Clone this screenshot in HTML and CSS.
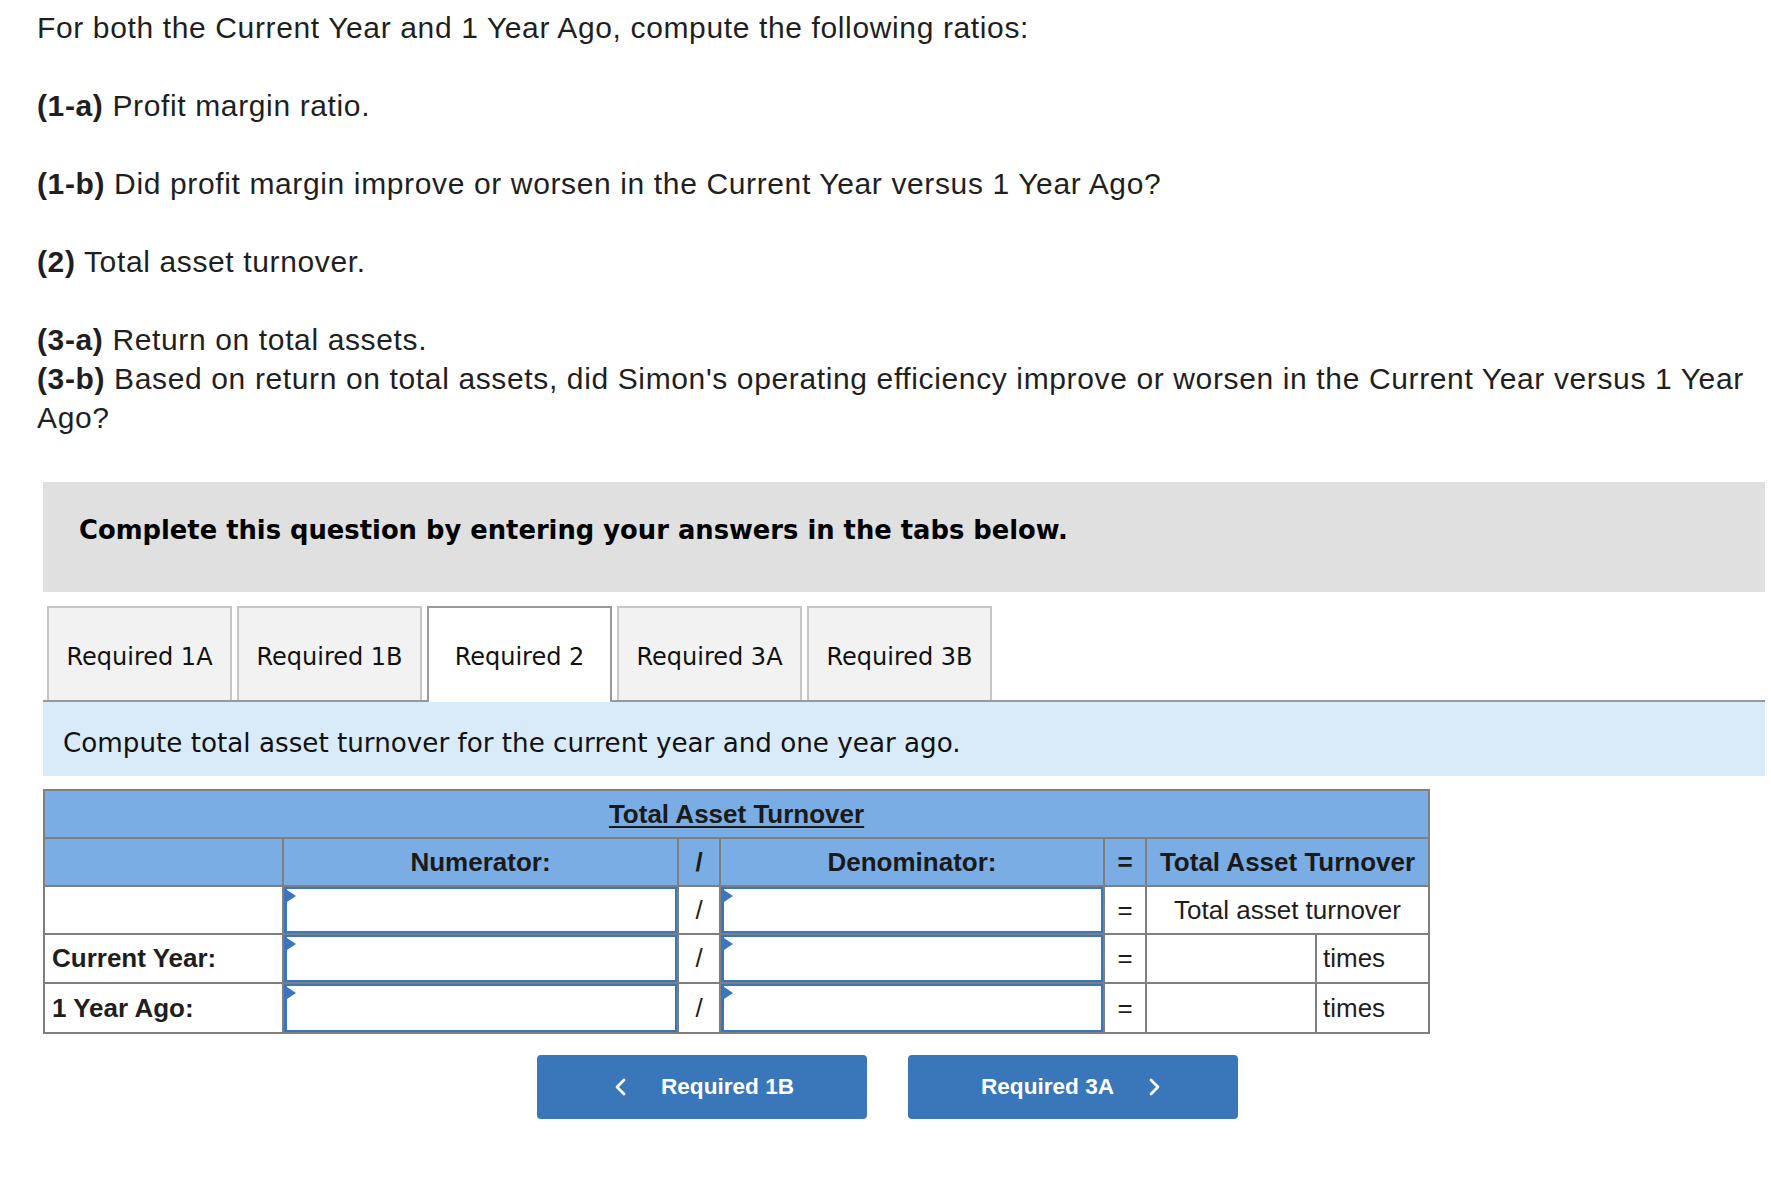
FILE: index.html
```html
<!DOCTYPE html>
<html lang="en">
<head>
<meta charset="utf-8">
<title>Total Asset Turnover</title>
<link rel="stylesheet" href="styles.css">
</head>
<body>
<div class="question">
  <p class="para">For both the Current Year and 1 Year Ago, compute the following ratios:</p>
  <p class="para"><b>(1-a)</b> Profit margin ratio.</p>
  <p class="para"><b>(1-b)</b> Did profit margin improve or worsen in the Current Year versus 1 Year Ago?</p>
  <p class="para"><b>(2)</b> Total asset turnover.</p>
  <p class="para tight"><b>(3-a)</b> Return on total assets.</p>
  <p class="para last"><b>(3-b)</b> Based on return on total assets, did Simon's operating efficiency improve or worsen in the Current Year versus 1 Year Ago?</p>
</div>

<div class="instructions">Complete this question by entering your answers in the tabs below.</div>

<div class="tabs">
  <div class="tab">Required 1A</div>
  <div class="tab">Required 1B</div>
  <div class="tab active">Required 2</div>
  <div class="tab">Required 3A</div>
  <div class="tab">Required 3B</div>
</div>

<div class="prompt">Compute total asset turnover for the current year and one year ago.</div>

<table class="grid">
  <colgroup>
    <col class="c-label">
    <col class="c-num">
    <col class="c-op">
    <col class="c-den">
    <col class="c-op">
    <col class="c-val">
    <col class="c-unit">
  </colgroup>
  <tr class="head">
    <td colspan="7" class="title"><span>Total Asset Turnover</span></td>
  </tr>
  <tr class="head">
    <td></td>
    <td class="center">Numerator:</td>
    <td class="center">/</td>
    <td class="center">Denominator:</td>
    <td class="center">=</td>
    <td colspan="2" class="center">Total Asset Turnover</td>
  </tr>
  <tr>
    <td></td>
    <td class="in"><div class="field"></div></td>
    <td class="center">/</td>
    <td class="in"><div class="field"></div></td>
    <td class="center">=</td>
    <td colspan="2" class="center">Total asset turnover</td>
  </tr>
  <tr class="row-b">
    <td class="label">Current Year:</td>
    <td class="in"><div class="field"></div></td>
    <td class="center">/</td>
    <td class="in"><div class="field"></div></td>
    <td class="center">=</td>
    <td></td>
    <td class="unit">times</td>
  </tr>
  <tr class="row-c">
    <td class="label">1 Year Ago:</td>
    <td class="in"><div class="field"></div></td>
    <td class="center">/</td>
    <td class="in"><div class="field"></div></td>
    <td class="center">=</td>
    <td></td>
    <td class="unit">times</td>
  </tr>
</table>

<div class="nav">
  <div class="btn prev">
    <svg class="chev" width="14" height="18" viewBox="0 0 14 18"><polyline points="11,2 4,9 11,16" fill="none" stroke="#fff" stroke-width="2.8" stroke-linecap="round" stroke-linejoin="round"/></svg>
    <span>Required 1B</span>
  </div>
  <div class="btn next">
    <span>Required 3A</span>
    <svg class="chev" width="14" height="18" viewBox="0 0 14 18"><polyline points="3,2 10,9 3,16" fill="none" stroke="#fff" stroke-width="2.8" stroke-linecap="round" stroke-linejoin="round"/></svg>
  </div>
</div>
</body>
</html>
```

FILE: styles.css
```css
html, body {
  margin: 0;
  padding: 0;
  background: #fff;
}

body {
  font-family: "Liberation Sans", Arial, sans-serif;
  color: #1f1f1f;
}

.question {
  padding: 8px 6px 0 37px;
  font-size: 30px;
  line-height: 39px;
  letter-spacing: 0.021em;
}

.para {
  margin: 0 0 39px 0;
}

.para.tight,
.para.last {
  margin-bottom: 0;
}

.question b {
  font-weight: bold;
}

.instructions {
  margin: 45px 6px 0 43px;
  height: 110px;
  box-sizing: border-box;
  padding: 33px 0 0 36px;
  background: #e0e0e0;
  font-family: "DejaVu Sans", Verdana, sans-serif;
  font-weight: bold;
  font-size: 25.8px;
  line-height: 30px;
  color: #000;
}

.tabs {
  display: flex;
  gap: 5px;
  margin: 14px 6px 0 43px;
  padding-left: 4px;
  border-bottom: 2px solid #999;
  height: 94px;
}

.tab {
  width: 185px;
  height: 94px;
  box-sizing: border-box;
  border: 2px solid #c6c6c6;
  border-bottom: none;
  background: #f2f2f2;
  display: flex;
  align-items: center;
  justify-content: center;
  padding-top: 6px;
  font-family: "DejaVu Sans", Verdana, sans-serif;
  font-size: 24px;
  color: #111;
}

.tab.active {
  background: #fff;
  border-color: #999;
  height: 96px;
  margin-bottom: -2px;
  padding-bottom: 2px;
}

.prompt {
  margin: 0 6px 0 43px;
  height: 74px;
  box-sizing: border-box;
  padding: 26px 0 0 20px;
  background: #d9ebf9;
  font-family: "DejaVu Sans", Verdana, sans-serif;
  font-size: 26.2px;
  line-height: 30px;
  color: #111;
}

.grid {
  margin: 13px 0 0 43px;
  border-collapse: collapse;
  table-layout: fixed;
  width: 1385px;
  font-family: "Liberation Sans", Arial, sans-serif;
  font-size: 26px;
  color: #1e1e1e;
}

.c-label { width: 239px; }
.c-num { width: 395px; }
.c-op { width: 42px; }
.c-den { width: 384px; }
.c-val { width: 170px; }
.c-unit { width: 113px; }

.grid tr {
  height: 48px;
}

.grid tr.row-b {
  height: 49px;
}

.grid tr.row-c {
  height: 50px;
}

.grid td {
  border: 2px solid #7f7f7f;
  padding: 0;
  vertical-align: middle;
  background: #fff;
}

.grid tr.head td {
  background: #79ade4;
  font-weight: bold;
  color: #1a1a1a;
}

.grid td.title {
  text-align: center;
}

.grid td.title span {
  text-decoration: underline;
  text-underline-offset: 3px;
}

.center {
  text-align: center;
}

.grid td.label {
  font-weight: bold;
  padding-left: 7px;
}

.grid td.unit {
  padding-left: 6px;
}

.field {
  position: relative;
  height: 46px;
  box-sizing: border-box;
  border: 2px solid #3a76bd;
  border-left-width: 3px;
  background: #fff;
}

.row-b .field {
  height: 47px;
}

.row-c .field {
  height: 48px;
}

.field::before {
  content: "";
  position: absolute;
  left: 0;
  top: 1px;
  border-left: 9px solid #3a76bd;
  border-top: 6px solid transparent;
  border-bottom: 6px solid transparent;
}

.nav {
  display: flex;
  justify-content: center;
  gap: 41px;
  margin-top: 21px;
  padding-left: 3px;
}

.btn {
  width: 330px;
  height: 64px;
  box-sizing: border-box;
  background: #3a76ba;
  border-radius: 4px;
  display: flex;
  align-items: center;
  justify-content: center;
  gap: 34px;
  color: #fff;
  font-family: "Liberation Sans", Arial, sans-serif;
  font-weight: bold;
  font-size: 22.6px;
}

.btn.prev {
  padding-left: 4px;
}

.btn.next {
  padding-right: 2px;
}

.chev {
  display: block;
}
```
